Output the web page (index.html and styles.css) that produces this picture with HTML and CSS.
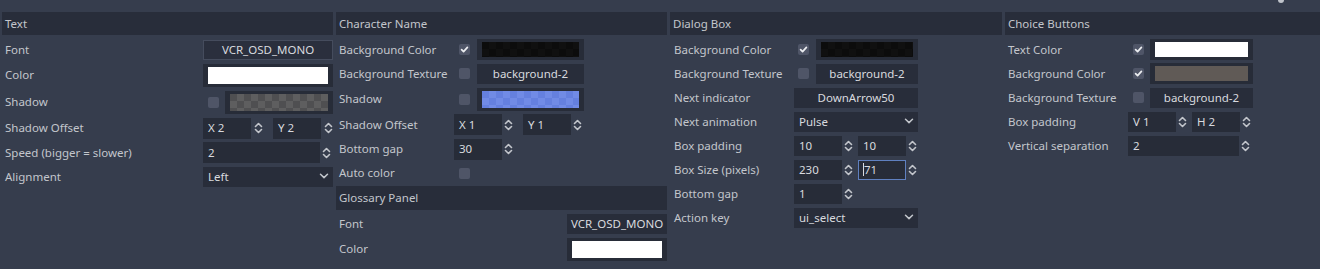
FILE: index.html
```html
<!DOCTYPE html>
<html>
<head>
<meta charset="utf-8">
<link rel="stylesheet" href="styles.css">
</head>
<body>
<div class="topbar"><span class="topicon"></span></div>
<div class="cols">
  <section class="col c1">
    <div class="hdr">Text</div>
    <div class="row"><span class="lbl">Font</span><div class="btn hl full">VCR_OSD_MONO</div></div>
    <div class="row h24"><span class="lbl">Color</span><div class="swatch full tall"><div class="fill white"></div></div></div>
    <div class="row h24"><span class="lbl">Shadow</span>
      <div class="chkw"><span class="box"></span></div>
      <div class="swatch grow tall"><div class="fill checker-grey"></div></div></div>
    <div class="row h22"><span class="lbl">Shadow Offset</span>
      <div class="spin wide-gap"><div class="inp">X 2</div><svg class="arr" viewBox="0 0 9 12"><path d="M1.5 4.5L4.5 1.5L7.5 4.5M1.5 7.5L4.5 10.5L7.5 7.5"/></svg></div>
      <div class="spin"><div class="inp">Y 2</div><svg class="arr" viewBox="0 0 9 12"><path d="M1.5 4.5L4.5 1.5L7.5 4.5M1.5 7.5L4.5 10.5L7.5 7.5"/></svg></div>
    </div>
    <div class="row"><span class="lbl">Speed (bigger = slower)</span>
      <div class="spin full"><div class="inp grow">2</div><svg class="arr" viewBox="0 0 9 12"><path d="M1.5 4.5L4.5 1.5L7.5 4.5M1.5 7.5L4.5 10.5L7.5 7.5"/></svg></div>
    </div>
    <div class="row"><span class="lbl">Alignment</span>
      <div class="opt full"><span>Left</span><svg class="chev" viewBox="0 0 10 6"><path d="M1.5 1.2L5 4.6L8.5 1.2"/></svg></div>
    </div>
  </section>

  <section class="col c2">
    <div class="hdr">Character Name</div>
    <div class="row"><span class="lbl">Background Color</span>
      <div class="chkw"><span class="box on"><svg viewBox="0 0 11 11"><path d="M2.6 5.6L4.6 7.6L8.4 3.4"/></svg></span></div>
      <div class="swatch sw2"><div class="fill black"></div></div></div>
    <div class="row"><span class="lbl">Background Texture</span>
      <div class="chkw"><span class="box"></span></div>
      <div class="btn sw2">background-2</div></div>
    <div class="row h24"><span class="lbl">Shadow</span>
      <div class="chkw"><span class="box"></span></div>
      <div class="swatch sw2 tall"><div class="fill checker-blue"></div></div></div>
    <div class="row"><span class="lbl">Shadow Offset</span>
      <div class="spin wide-gap"><div class="inp">X 1</div><svg class="arr" viewBox="0 0 9 12"><path d="M1.5 4.5L4.5 1.5L7.5 4.5M1.5 7.5L4.5 10.5L7.5 7.5"/></svg></div>
      <div class="spin"><div class="inp">Y 1</div><svg class="arr" viewBox="0 0 9 12"><path d="M1.5 4.5L4.5 1.5L7.5 4.5M1.5 7.5L4.5 10.5L7.5 7.5"/></svg></div>
    </div>
    <div class="row h22"><span class="lbl">Bottom gap</span>
      <div class="spin"><div class="inp">30</div><svg class="arr" viewBox="0 0 9 12"><path d="M1.5 4.5L4.5 1.5L7.5 4.5M1.5 7.5L4.5 10.5L7.5 7.5"/></svg></div>
    </div>
    <div class="row h20"><span class="lbl">Auto color</span>
      <div class="chkw"><span class="box"></span></div></div>
    <div class="hdr sub">Glossary Panel</div>
    <div class="row"><span class="lbl grow">Font</span><div class="btn gl">VCR_OSD_MONO</div></div>
    <div class="row h24"><span class="lbl grow">Color</span><div class="swatch gl tall"><div class="fill white"></div></div></div>
  </section>

  <section class="col c3">
    <div class="hdr">Dialog Box</div>
    <div class="row"><span class="lbl">Background Color</span>
      <div class="chkw"><span class="box on"><svg viewBox="0 0 11 11"><path d="M2.6 5.6L4.6 7.6L8.4 3.4"/></svg></span></div>
      <div class="swatch sw3"><div class="fill black"></div></div></div>
    <div class="row"><span class="lbl">Background Texture</span>
      <div class="chkw"><span class="box"></span></div>
      <div class="btn sw3">background-2</div></div>
    <div class="row"><span class="lbl">Next indicator</span><div class="btn ctl3">DownArrow50</div></div>
    <div class="row"><span class="lbl">Next animation</span>
      <div class="opt ctl3"><span>Pulse</span><svg class="chev" viewBox="0 0 10 6"><path d="M1.5 1.2L5 4.6L8.5 1.2"/></svg></div></div>
    <div class="row"><span class="lbl">Box padding</span>
      <div class="spin"><div class="inp">10</div><svg class="arr" viewBox="0 0 9 12"><path d="M1.5 4.5L4.5 1.5L7.5 4.5M1.5 7.5L4.5 10.5L7.5 7.5"/></svg></div>
      <div class="spin"><div class="inp">10</div><svg class="arr" viewBox="0 0 9 12"><path d="M1.5 4.5L4.5 1.5L7.5 4.5M1.5 7.5L4.5 10.5L7.5 7.5"/></svg></div>
    </div>
    <div class="row"><span class="lbl">Box Size (pixels)</span>
      <div class="spin"><div class="inp">230</div><svg class="arr" viewBox="0 0 9 12"><path d="M1.5 4.5L4.5 1.5L7.5 4.5M1.5 7.5L4.5 10.5L7.5 7.5"/></svg></div>
      <div class="spin"><div class="inp focus"><span class="caret"></span>71</div><svg class="arr" viewBox="0 0 9 12"><path d="M1.5 4.5L4.5 1.5L7.5 4.5M1.5 7.5L4.5 10.5L7.5 7.5"/></svg></div>
    </div>
    <div class="row"><span class="lbl">Bottom gap</span>
      <div class="spin"><div class="inp">1</div><svg class="arr" viewBox="0 0 9 12"><path d="M1.5 4.5L4.5 1.5L7.5 4.5M1.5 7.5L4.5 10.5L7.5 7.5"/></svg></div>
    </div>
    <div class="row"><span class="lbl">Action key</span>
      <div class="opt ctl3"><span>ui_select</span><svg class="chev" viewBox="0 0 10 6"><path d="M1.5 1.2L5 4.6L8.5 1.2"/></svg></div></div>
  </section>

  <section class="col c4">
    <div class="hdr">Choice Buttons</div>
    <div class="row"><span class="lbl">Text Color</span>
      <div class="chkw"><span class="box on"><svg viewBox="0 0 11 11"><path d="M2.6 5.6L4.6 7.6L8.4 3.4"/></svg></span></div>
      <div class="swatch sw4"><div class="fill white"></div></div></div>
    <div class="row"><span class="lbl">Background Color</span>
      <div class="chkw"><span class="box on"><svg viewBox="0 0 11 11"><path d="M2.6 5.6L4.6 7.6L8.4 3.4"/></svg></span></div>
      <div class="swatch sw4"><div class="fill taupe"></div></div></div>
    <div class="row"><span class="lbl">Background Texture</span>
      <div class="chkw"><span class="box"></span></div>
      <div class="btn sw4">background-2</div></div>
    <div class="row"><span class="lbl">Box padding</span>
      <div class="spin"><div class="inp">V 1</div><svg class="arr" viewBox="0 0 9 12"><path d="M1.5 4.5L4.5 1.5L7.5 4.5M1.5 7.5L4.5 10.5L7.5 7.5"/></svg></div>
      <div class="spin"><div class="inp">H 2</div><svg class="arr" viewBox="0 0 9 12"><path d="M1.5 4.5L4.5 1.5L7.5 4.5M1.5 7.5L4.5 10.5L7.5 7.5"/></svg></div>
    </div>
    <div class="row"><span class="lbl">Vertical separation</span>
      <div class="spin vs"><div class="inp grow">2</div><svg class="arr" viewBox="0 0 9 12"><path d="M1.5 4.5L4.5 1.5L7.5 4.5M1.5 7.5L4.5 10.5L7.5 7.5"/></svg></div>
    </div>
  </section>
</div>
</body>
</html>
```
FILE: styles.css
```css
html, body {
  margin: 0;
  padding: 0;
  background: #363d4d;
  width: 1320px;
  height: 269px;
  overflow: hidden;
}
body {
  font-family: "Noto Sans", "Open Sans", sans-serif;
  font-size: 11.5px;
  color: #c3c6cc;
}
.topbar {
  height: 12px;
  display: flex;
  justify-content: flex-end;
  padding-right: 36px;
}
.topicon {
  width: 6px;
  height: 3px;
  background: #bfc3ca;
  border-radius: 0 0 3px 3px;
}
.cols {
  display: flex;
  gap: 3px;
  padding-left: 2px;
}
.col {
  display: flex;
  flex-direction: column;
  gap: 3px;
  width: 331px;
  flex: none;
}
.c3 { width: 332px; }
.c4 { flex: 1; width: auto; }
.hdr {
  height: 23px;
  margin-bottom: 1px;
  background: #282d3a;
  display: flex;
  align-items: center;
  padding-left: 3px;
  padding-bottom: 1px;
  box-sizing: border-box;
  color: #c3c6cc;
}
.hdr.sub { height: 24px; margin-bottom: 0; }
.row {
  height: 21px;
  display: flex;
  align-items: center;
}
.row.h20 { height: 20px; }
.row.h22 { height: 22px; }
.row.h24 { height: 24px; }
.lbl {
  flex: none;
  box-sizing: border-box;
  padding-left: 3px;
  padding-bottom: 1px;
  white-space: nowrap;
}
.lbl.grow { flex: 1; }
.c1 .lbl { width: 201px; }
.c2 .lbl { width: 118px; }
.c3 .lbl { width: 124px; padding-left: 4px; }
.c4 .lbl { width: 123px; }
.c2 .lbl.grow { width: auto; }

.full { width: 130px; }
.grow { flex: 1; }

.btn {
  box-sizing: border-box;
  height: 20px;
  background: #282d3a;
  color: #d8dadf;
  display: flex;
  align-items: center;
  justify-content: center;
  white-space: nowrap;
  flex: none;
}
.btn.hl {
  border: 1px solid #454c5d;
  background: #2a2f3d;
}
.swatch {
  box-sizing: border-box;
  height: 21px;
  padding: 3px 5px;
  background: #272c38;
  display: flex;
  flex: none;
}
.swatch.tall { height: 23px; }
.swatch.grow { flex: 1; }
.fill { flex: 1; }
.white { background: #ffffff; }
.black {
  background-color: #0c0c0c;
  background-image: conic-gradient(#101010 25%, #0c0c0c 0 50%, #101010 0 75%, #0c0c0c 0);
  background-size: 14px 14px;
}
.taupe { background: #605a56; }
.checker-grey {
  background-color: #4f4f51;
  background-image: conic-gradient(#5e5e5f 25%, #4f4f51 0 50%, #5e5e5f 0 75%, #4f4f51 0);
  background-size: 14px 14px;
}
.checker-blue {
  background-color: #6580df;
  background-image: conic-gradient(#718be6 25%, #6580df 0 50%, #718be6 0 75%, #6580df 0);
  background-size: 14px 14px;
}
.sw2 { width: 107px; }
.sw3 { width: 102px; }
.sw4 { width: 103px; }
.ctl3 { width: 124px; }
.gl { width: 100px; }

.chkw {
  width: 22px;
  flex: none;
  display: flex;
  align-items: center;
}
.c2 .chkw { width: 23px; }
.box {
  margin-left: 5px;
  width: 11px;
  height: 11px;
  border-radius: 2px;
  background: #4f5567;
  display: block;
}
.c3 .box { margin-left: 4px; }
.box svg {
  width: 11px;
  height: 11px;
  display: block;
  fill: none;
  stroke: #eceef1;
  stroke-width: 1.7;
  stroke-linecap: round;
  stroke-linejoin: round;
}

.spin {
  display: flex;
  align-items: center;
  flex: none;
  margin-right: 5px;
}
.spin.wide-gap { margin-right: 10px; }
.spin.full { margin-right: 0; }
.spin.vs { width: 122px; }
.inp {
  box-sizing: border-box;
  width: 48px;
  height: 21px;
  background: #272c38;
  color: #d8dadf;
  display: flex;
  align-items: center;
  padding-left: 5px;
  padding-bottom: 1px;
  white-space: nowrap;
}
.c3 .inp, .c4 .inp { height: 20px; }
.inp.grow { flex: 1; width: auto; }
.inp.focus {
  border: 1px solid #5f80c0;
  padding-left: 4px;
}
.caret {
  width: 1px;
  height: 13px;
  background: #d8dade;
}
.arr {
  width: 9px;
  height: 12px;
  margin-left: 2px;
  flex: none;
  fill: none;
  stroke: #c3c6cc;
  stroke-width: 1.6;
  stroke-linecap: round;
  stroke-linejoin: round;
}
.c1 .spin .arr { margin-left: 3px; }
.spin.full .arr { margin-left: 2px; margin-right: 2px; }

.opt {
  box-sizing: border-box;
  height: 20px;
  background: #282d3a;
  color: #d8dadf;
  display: flex;
  align-items: center;
  justify-content: space-between;
  padding: 0 4px 1px 5px;
  flex: none;
}
.chev {
  width: 10px;
  height: 6px;
  fill: none;
  stroke: #c3c6cc;
  stroke-width: 1.5;
  stroke-linecap: round;
  stroke-linejoin: round;
}
```
